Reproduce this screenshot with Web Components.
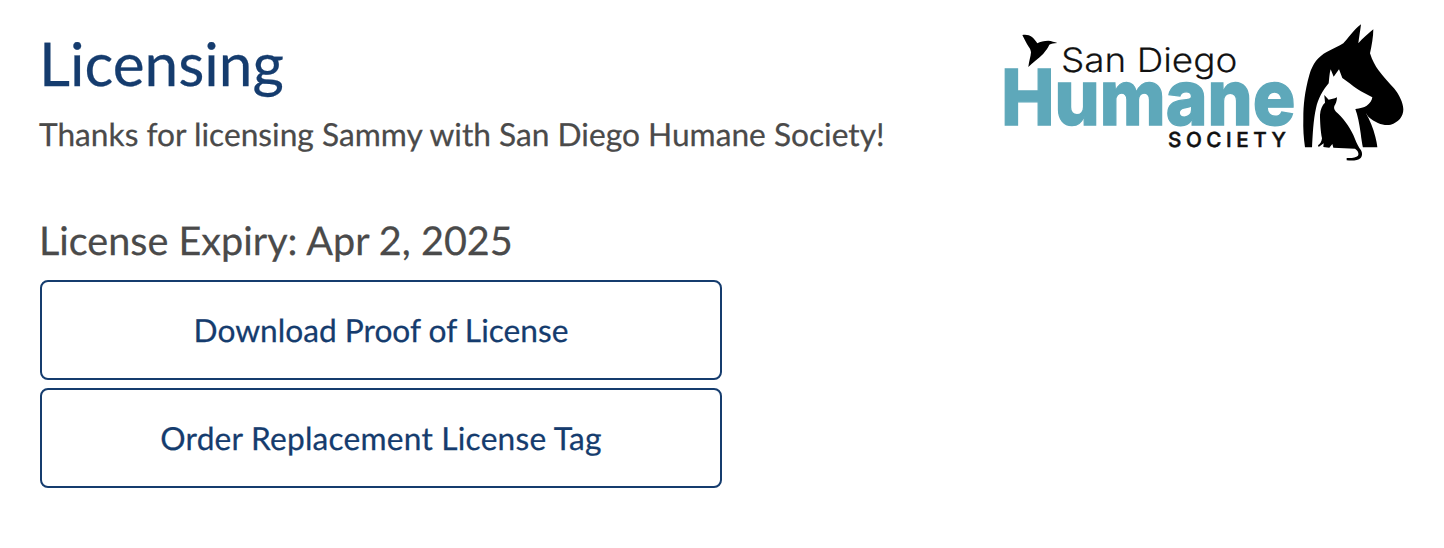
<!DOCTYPE html>
<html><head><meta charset="utf-8"><style>
html,body{margin:0;background:#fff}
body{font-family:Lato,sans-serif}
</style></head><body>
<licensing-panel>
  <span slot="title">Licensing</span>
  <span slot="intro">Thanks for licensing Sammy with San Diego Humane Society!</span>
  <span slot="expiry">License Expiry: Apr 2, 2025</span>
  <action-button>Download Proof of License</action-button>
  <action-button style="letter-spacing:.21px">Order Replacement License Tag</action-button>
</licensing-panel>
<script>
class ActionButton extends HTMLElement{constructor(){super();this.attachShadow({mode:'open'}).innerHTML=`<style>
:host{display:flex;box-sizing:border-box;height:100px;align-items:center;justify-content:center;border:2px solid #153c6e;border-radius:8px;color:#153c6e;font:400 31.7px/1.2 Lato,sans-serif;background:#fff;text-rendering:geometricPrecision;-webkit-text-stroke:.25px #153c6e}
</style><slot></slot>`}}
customElements.define('action-button',ActionButton);
class HumaneLogo extends HTMLElement{constructor(){super();this.attachShadow({mode:'open'}).innerHTML=`<style>
:host{display:block;width:420px;height:155px}svg{display:block}
</style><svg width="420" height="155" viewBox="0 0 1260 465" role="img" aria-label="San Diego Humane Society">
<g transform="translate(30,30)"><path fill="#000" d="M37 30C48 28 58 30 66 36C73 42 78 49 82 55C90 50 102 47 115 47C124 48 134 51 142 54C132 55 124 56 118 59C114 68 108 76 100 86C86 100 68 112 55 126C57 108 62 96 63 82C62 74 60 70 56 65C49 55 43 42 37 30Z"/></g>
<text x="183" y="170" font-family="Inter,Lato,sans-serif" font-size="101" font-weight="300" fill="#111" stroke="#111" stroke-width=".5" textLength="529" lengthAdjust="spacingAndGlyphs">San Diego</text>
<text x="4" y="330" font-family="Inter,Lato,sans-serif" font-size="231" font-weight="800" fill="#5ea8ba" stroke="#5ea8ba" stroke-width="4" textLength="882" lengthAdjust="spacingAndGlyphs">Humane</text>
<text x="504" y="397" font-family="Inter,Lato,sans-serif" font-size="62" font-weight="500" fill="#111" stroke="#111" stroke-width="1.5" textLength="354">SOCIETY</text>
<g transform="translate(870,15)">
<path fill="#000" d="M213 13C211 32 207 52 205 70C218 55 235 40 250 28C250 50 245 78 240 100C247 122 256 138 265 150C280 170 298 190 312 205C328 225 339 247 340 268C340 290 325 308 302 314C282 318 258 310 235 290L227 278C240 300 250 325 256 350C259 362 261 372 262 382L45 382C41 355 39 325 40 295C40 255 44 215 58 165C68 130 85 110 110 96C130 86 148 78 160 70C172 58 190 30 213 13Z"/>
<path fill="#fff" d="M122 148L131 170L147 148L157 174C172 185 188 197 202 207C216 216 232 224 247 232C246 241 240 250 230 257C222 262 210 265 196 267C203 285 208 310 212 340C214 356 216 370 219 384L66 384C68 345 70 300 78 265C84 235 98 212 116 190C118 175 118 160 122 148Z"/>
<path fill="#000" d="M103 225L116 239C124 238 132 236 141 232C141 243 137 252 133 258C131 264 133 270 138 275C158 292 178 318 190 345C196 360 201 372 208 384C217 393 219 406 212 414C204 421 190 423 170 421L170 414C185 415 198 413 204 407C208 400 203 391 195 386L130 383L127 372L118 383L100 381L101 370L86 381L84 376C91 372 95 365 96 355C92 335 90 305 90 285C91 268 97 255 105 248C105 240 103 232 103 225Z"/>
</g></svg>`}}
customElements.define('humane-logo',HumaneLogo);
class LicensingPanel extends HTMLElement{constructor(){super();this.attachShadow({mode:'open'}).innerHTML=`<style>
:host{display:block;box-sizing:border-box;width:1444px;height:548px;padding:0 40px;font-family:Lato,sans-serif;color:#4a4a4a;text-rendering:geometricPrecision;-webkit-text-stroke:.25px}
header{display:flex;justify-content:space-between;align-items:flex-start}
.text{padding-top:29px}
h1{margin:0 0 0 -1px;font:400 60.3px/68px Lato,sans-serif;color:#153c6e}
p{margin:17px 0 0 -1px;font:400 31.7px/40px Lato,sans-serif}
.logo{margin-right:-16px;padding-top:15px}
h2{margin:47px 0 0 -1px;font:400 39.6px/48px Lato,sans-serif}
.actions{display:grid;gap:8px;width:682px;margin-top:15px}
</style><header><div class="text"><h1><slot name="title"></slot></h1><p><slot name="intro"></slot></p></div><div class="logo"><humane-logo></humane-logo></div></header>
<h2><slot name="expiry"></slot></h2><div class="actions"><slot></slot></div>`}}
customElements.define('licensing-panel',LicensingPanel);
</script></body></html>
